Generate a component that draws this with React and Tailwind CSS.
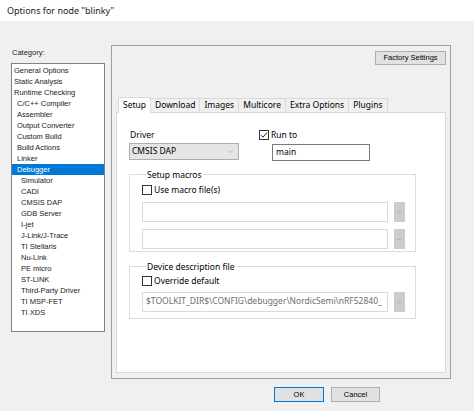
import { ChevronDown } from 'lucide-react';

const categories = [
  { label: 'General Options', indent: 0 },
  { label: 'Static Analysis', indent: 0 },
  { label: 'Runtime Checking', indent: 0 },
  { label: 'C/C++ Compiler', indent: 1 },
  { label: 'Assembler', indent: 1 },
  { label: 'Output Converter', indent: 1 },
  { label: 'Custom Build', indent: 1 },
  { label: 'Build Actions', indent: 1 },
  { label: 'Linker', indent: 1 },
  { label: 'Debugger', indent: 1, selected: true },
  { label: 'Simulator', indent: 2 },
  { label: 'CADI', indent: 2 },
  { label: 'CMSIS DAP', indent: 2 },
  { label: 'GDB Server', indent: 2 },
  { label: 'I-jet', indent: 2 },
  { label: 'J-Link/J-Trace', indent: 2 },
  { label: 'TI Stellaris', indent: 2 },
  { label: 'Nu-Link', indent: 2 },
  { label: 'PE micro', indent: 2 },
  { label: 'ST-LINK', indent: 2 },
  { label: 'Third-Party Driver', indent: 2 },
  { label: 'TI MSP-FET', indent: 2 },
  { label: 'TI XDS', indent: 2 },
];

const tabs = ['Setup', 'Download', 'Images', 'Multicore', 'Extra Options', 'Plugins'];

const indentClass = ['pl-[2px]', 'pl-[5px]', 'pl-[9px]'];

const CheckBox = ({ checked, label }) => (
  <div className="flex items-center gap-[2px]">
    <div className="w-[10px] h-[10px] border border-[#333] bg-white flex items-center justify-center">
      {checked && (
        <svg width="8" height="8" viewBox="0 0 8 8">
          <path d="M1 4.2 L3 6.2 L7 1.5" fill="none" stroke="#222" strokeWidth="1" />
        </svg>
      )}
    </div>
    <span>{label}</span>
  </div>
);

const PathRow = ({ value }) => (
  <div className="flex items-stretch gap-[6px] h-[20px]">
    <div className="w-[246px] border border-[#dadada] bg-white px-[3px] flex items-center text-[#6d6d6d] overflow-hidden whitespace-nowrap">
      {value}
    </div>
    <div className="w-[11px] bg-[#cccccc] flex items-center justify-center text-[6px] text-[#8a8a8a]">...</div>
  </div>
);

export default function App() {
  return (
    <div className="w-[474px] h-[411px] bg-[#f0f0f0] flex flex-col overflow-hidden font-['Noto_Sans',sans-serif] text-black">
      <div className="h-[21px] bg-white flex items-center pl-[7px] text-[9px] text-[#1a1a1a] shrink-0">
        Options for node "blinky"
      </div>

      <div className="flex flex-1">
        {/* left category column */}
        <div className="w-[100px] pl-[11px] pt-[26px] shrink-0">
          <div className="h-[16px] text-[7.5px] font-['Liberation_Sans',sans-serif] pl-[1px] text-[#1a1a1a]">Category:</div>
          <div className="w-[94px] h-[269px] bg-white border border-[#828282] pt-[1px] font-['Liberation_Sans',sans-serif] text-[7.5px] text-[#1a1a1a]">
            {categories.map((c) => (
              <div
                key={c.label}
                className={`h-[11px] leading-[11px] ${indentClass[c.indent]} ${c.selected ? 'bg-[#0078d7] text-white' : ''}`}
              >
                {c.label}
              </div>
            ))}
          </div>
        </div>

        {/* right options panel */}
        <div className="flex flex-col ml-[11px] mt-[24px]">
          <div className="w-[340px] h-[334px] border border-[#a0a0a0] flex flex-col px-[4px]">
            <div className="flex justify-end pt-[5px]">
              <div className="w-[71px] h-[14px] bg-[#e1e1e1] border border-[#adadad] flex items-center justify-center text-[7.5px] font-['Liberation_Sans',sans-serif]">
                Factory Settings
              </div>
            </div>

            <div className="flex items-end h-[16px] mt-[31px] pl-[2px] text-[8.5px]">
              {tabs.map((t, i) =>
                i === 0 ? (
                  <div key={t} className="h-[16px] px-[4px] bg-white border border-b-0 border-[#d9d9d9] flex items-center relative top-[1px]">
                    {t}
                  </div>
                ) : (
                  <div key={t} className="h-[14px] px-[4px] bg-[#f0f0f0] border border-l-0 border-b-0 border-[#d9d9d9] flex items-center">
                    {t}
                  </div>
                )
              )}
            </div>

            <div className="w-[330px] h-[261px] bg-white border border-[#d9d9d9] pl-[12px] pt-[16px] text-[8.5px]">
              <div className="flex">
                <div className="w-[130px]">
                  <div className="h-[14px] pl-[1px]">Driver</div>
                  <div className="w-[110px] h-[17px] bg-[#e5e5e5] border border-[#adadad] flex items-center justify-between px-[2px]">
                    <span>CMSIS DAP</span>
                    <ChevronDown size={9} strokeWidth={1.3} className="text-[#888] mr-[1px]" />
                  </div>
                </div>
                <div className="flex flex-col">
                  <CheckBox checked label="Run to" />
                  <div className="ml-[13px] mt-[2px] w-[98px] h-[17px] border border-[#7a7a7a] bg-white px-[3px] flex items-center">main</div>
                </div>
              </div>

              <fieldset className="w-[287px] h-[82px] mt-[9px] border border-[#dcdcdc] pl-[12px]">
                <legend className="ml-[4px] px-[1px] leading-[10px]">Setup macros</legend>
                <div className="mt-[4px]">
                  <CheckBox label="Use macro file(s)" />
                </div>
                <div className="mt-[5px] flex flex-col gap-[7px]">
                  <PathRow value="" />
                  <PathRow value="" />
                </div>
              </fieldset>

              <fieldset className="w-[287px] h-[57px] mt-[10px] border border-[#dcdcdc] pl-[12px]">
                <legend className="ml-[4px] px-[1px] leading-[10px]">Device description file</legend>
                <div className="mt-[3px]">
                  <CheckBox label="Override default" />
                </div>
                <div className="mt-[4px]">
                  <PathRow value="$TOOLKIT_DIR$\CONFIG\debugger\NordicSemi\nRF52840_" />
                </div>
              </fieldset>
            </div>
          </div>

          <div className="flex gap-[7px] mt-[8px] ml-[163px] font-['Liberation_Sans',sans-serif] text-[7.5px]">
            <div className="w-[50px] h-[15px] bg-[#e1e1e1] border border-[#0078d7] flex items-center justify-center">OK</div>
            <div className="w-[49px] h-[15px] bg-[#e1e1e1] border border-[#adadad] flex items-center justify-center">Cancel</div>
          </div>
        </div>
      </div>
    </div>
  );
}
